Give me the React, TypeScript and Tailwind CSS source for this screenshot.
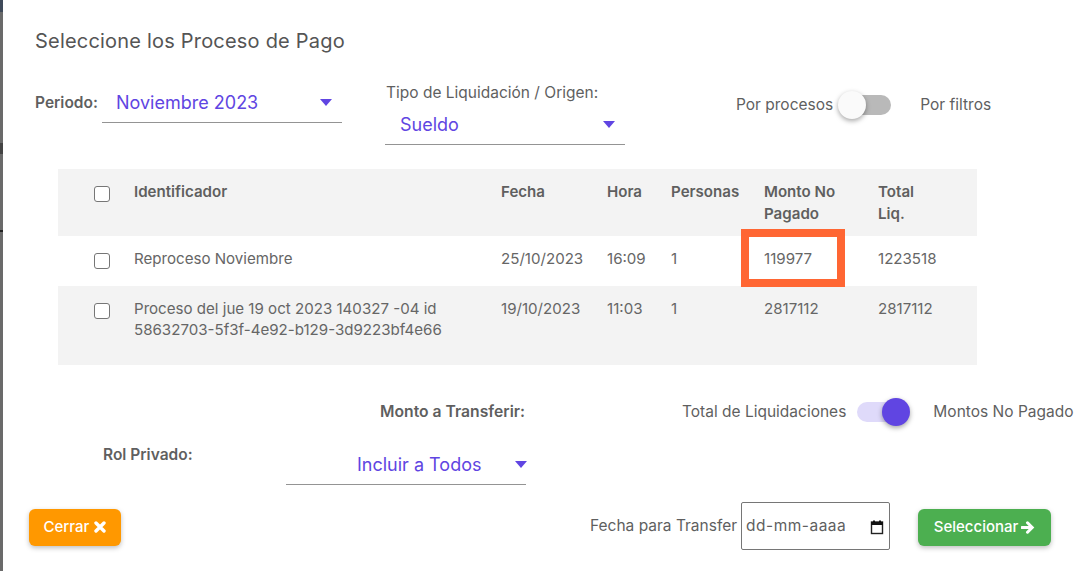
const Caret = () => (
	<svg width="12" height="7" viewBox="0 0 12 7" className="shrink-0 translate-x-px">
		<path d="M0 0h12L6 7z" fill="#6045e2" />
	</svg>
);

const Select = ({ value, className }: { value: string; className: string }) => (
	<div
		className={`flex items-center justify-between h-10 w-60 border-b border-[#949494] text-[18px] text-[#6045e2] ${className}`}
	>
		<span>{value}</span>
		<Caret />
	</div>
);

const Check = () => (
	<span className="block w-4 h-4 rounded-[3px] border border-[#767676] bg-white" />
);

const CloseIcon = () => (
	<svg width="12" height="12" viewBox="0 0 12 12" className="shrink-0">
		<path d="M2 2l8 8M10 2l-8 8" fill="none" stroke="#fff" strokeWidth="3.4" strokeLinecap="round" />
	</svg>
);

const ArrowIcon = () => (
	<svg width="14" height="13" viewBox="0 0 14 13" className="shrink-0">
		<path d="M1 6.5h9M6.5 1.8l4.7 4.7-4.7 4.7" fill="none" stroke="#fff" strokeWidth="3" strokeLinecap="round" />
	</svg>
);

const rows = [
	{
		id: 'Reproceso Noviembre',
		fecha: '25/10/2023',
		hora: '16:09',
		personas: '1',
		monto: '119977',
		total: '1223518',
		cls: 'h-[50px] bg-white',
		mark: true,
	},
	{
		id: 'Proceso del jue 19 oct 2023 140327 -04 id 58632703-5f3f-4e92-b129-3d9223bf4e66',
		fecha: '19/10/2023',
		hora: '11:03',
		personas: '1',
		monto: '2817112',
		total: '2817112',
		cls: 'h-[79px] bg-[#f3f3f3]',
		mark: false,
	},
];

const cols = 'grid grid-cols-[36px_40px_367px_106px_64px_93px_114px_99px]';

export default function App() {
	return (
		<div className="flex w-[1091px] h-[575px] overflow-hidden bg-white font-['Inter',sans-serif] text-[#5f5f5f]">
			<div className="relative w-[3px] h-[571px] bg-[#6a6a6a] shrink-0">
				<span className="absolute left-0 top-0 w-full h-3 bg-[#3f4a5a]" />
				<span className="absolute left-0 top-[143px] w-full h-[11px] bg-[#444]" />
				<span className="absolute left-0 top-[230px] w-full h-[2px] bg-[#222]" />
			</div>

			<div className="flex flex-col flex-1 min-w-0">
				<h2 className="pl-[32px] pt-[29px] text-[20px] leading-6 tracking-[0.2px] text-[#555]">
					Seleccione los Proceso de Pago
				</h2>

				<div className="flex items-start h-[62px] mt-[30px] pl-[32px]">
					<span className="mt-[10px] w-[67px] text-[15.5px] leading-5 font-semibold">Periodo:</span>
					<Select value="Noviembre 2023" className="pl-[14px] pr-[11px]" />
					<div className="ml-[43px] flex flex-col">
						<span className="h-[22px] text-[15.5px] leading-5 pl-px">Tipo de Liquidación / Origen:</span>
						<Select value="Sueldo" className="pl-[15px] pr-[11px]" />
					</div>
					<div className="flex items-center ml-[111px] mt-[8px] h-7 text-[15.5px]">
						<span>Por procesos</span>
						<div className="relative ml-[5px] w-[53px] h-7">
							<div className="absolute left-[5px] top-1 w-[48px] h-5 rounded-full bg-[#b9b9b9]" />
							<div className="absolute left-0 top-0 w-7 h-7 rounded-full bg-[#fafafa] shadow-[0_2px_5px_rgba(0,0,0,0.35)]" />
						</div>
						<span className="ml-[29px]">Por filtros</span>
					</div>
				</div>

				<div className="w-[919px] ml-[55px] mt-[24px] text-[15.1px]">
					<div className={`${cols} h-[67px] bg-[#f3f3f3] font-semibold leading-[22px] pt-[12px]`}>
						<div />
						<div className="pt-[5px]">
							<Check />
						</div>
						<div>Identificador</div>
						<div>Fecha</div>
						<div>Hora</div>
						<div>Personas</div>
						<div>Monto No Pagado</div>
						<div>
							Total
							<br />
							Liq.
						</div>
					</div>
					{rows.map((r) => (
						<div key={r.id} className={`${cols} ${r.cls} leading-[21px] pt-3 text-[#666]`}>
							<div />
							<div className="pt-[5px]">
								<Check />
							</div>
							<div className="pr-2">{r.id}</div>
							<div>{r.fecha}</div>
							<div>{r.hora}</div>
							<div>{r.personas}</div>
							<div className="relative">
								{r.monto}
								{r.mark && (
									<span className="absolute left-[-23px] top-[-19px] w-[104px] h-[58px] border-[8px] border-[#ff6633]" />
								)}
							</div>
							<div>{r.total}</div>
						</div>
					))}
				</div>

				<div className="flex items-center h-7 mt-[33px] text-[15.5px]">
					<span className="w-[522px] text-right text-[15.7px] font-semibold">Monto a Transferir:</span>
					<span className="ml-[157px]">Total de Liquidaciones</span>
					<div className="relative ml-[11px] w-[53px] h-7">
						<div className="absolute left-0 top-1 w-[48px] h-5 rounded-full bg-[#dfdafa]" />
						<div className="absolute right-0 top-0 w-7 h-7 rounded-full bg-[#6045e2] shadow-[0_2px_5px_rgba(0,0,0,0.35)]" />
					</div>
					<span className="ml-[23px]">Montos No Pagado</span>
				</div>

				<div className="flex items-start mt-[14px] h-[50px]">
					<span className="ml-[100px] mt-[5px] w-[183px] text-[15.5px] leading-5 font-semibold">
						Rol Privado:
					</span>
					<Select value="Incluir a Todos" className="pl-[71px] pr-0 mt-[5px]" />
				</div>

				<div className="flex items-center h-12 mt-[12px] pl-[26px] text-[15.5px]">
					<button className="flex items-center justify-center gap-[5px] mt-[2px] w-[92px] h-[37px] rounded-md bg-[#ff9800] text-white text-[15px] font-medium shadow-[0_2px_5px_rgba(0,0,0,0.25)]">
						Cerrar
						<CloseIcon />
					</button>
					<span className="ml-[469px]">Fecha para Transfer</span>
					<div className="flex items-center justify-between ml-[4px] w-[149px] h-12 px-[4px] rounded-[2px] border border-[#767676] tracking-[0.5px]">
						<span>dd-mm-aaaa</span>
						<svg width="14" height="15" viewBox="0 0 14 15" className="mr-[1px] mt-[2px]">
							<rect x="1.5" y="2" width="11" height="11.5" fill="none" stroke="#222" strokeWidth="1.4" />
							<rect x="1" y="2" width="12" height="3" fill="#111" />
							<rect x="3" y="0.5" width="2" height="2" fill="#111" />
							<rect x="9" y="0.5" width="2" height="2" fill="#111" />
						</svg>
					</div>
					<button className="flex items-center justify-center gap-[3px] mt-[2px] ml-[28px] w-[133px] h-[37px] rounded-md bg-[#4caf50] text-white text-[15px] font-medium shadow-[0_2px_5px_rgba(0,0,0,0.25)]">
						Seleccionar
						<ArrowIcon />
					</button>
				</div>
			</div>
		</div>
	);
}
